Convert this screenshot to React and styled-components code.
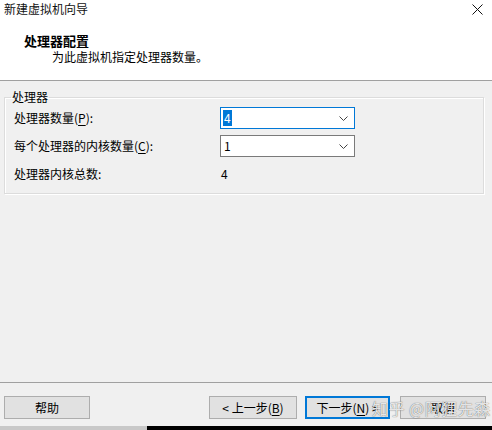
import React from 'react';
import styled, { createGlobalStyle } from 'styled-components';

const GlobalStyle = createGlobalStyle`
    html, body {
        margin: 0;
        padding: 0;
        background: #f0f0f0;
    }
    body {
        font-family: "Noto Sans CJK SC", "Noto Sans", sans-serif;
        font-size: 12px;
        color: #000;
    }
`

const Window = styled.div`
    position: relative;
    width: 492px;
    height: 430px;
    display: flex;
    flex-direction: column;
    background: #f0f0f0;
    overflow: hidden;
`

const Header = styled.div`
    height: 81px;
    flex-shrink: 0;
    padding-top: 2px;
    box-sizing: border-box;
    background: #fff;
    border-bottom: 1px solid #a0a0a0;
`

const TitleRow = styled.div`
    height: 14px;
    display: flex;
    align-items: center;
    justify-content: space-between;
    padding: 0 9px 0 4px;
`

const Title = styled.span`
    line-height: 14px;
    color: #111;
`

const Heading = styled.div`
    margin: 17px 0 0 24px;
    line-height: 16px;
    font-size: 13px;
    font-weight: bold;
`

const SubHeading = styled.div`
    margin-left: 52px;
    line-height: 16px;
`

const Body = styled.div`
    flex: 1;
    padding: 8px 8px 0 4px;
`

// etched group box with its caption sitting on the top edge
const GroupBox = styled.fieldset`
    margin: 0;
    padding: 2px 0 8px 9px;
    min-width: 0;
    border: 1px solid #dcdcdc;
    box-shadow: inset 1px 1px 0 #fff, 1px 1px 0 #fff;
`

const Legend = styled.legend`
    margin-left: -3px;
    padding: 0 1px;
    line-height: 16px;
`

const Grid = styled.div`
    display: grid;
    grid-template-columns: 206px 135px;
    grid-auto-rows: 22px;
    row-gap: 6px;
    align-items: center;
`

const Label = styled.span`
    line-height: 22px;
`

const Key = styled.span`
    text-decoration: underline;
    text-underline-offset: 2px;
`

const Combo = styled.div`
    height: 22px;
    box-sizing: border-box;
    display: flex;
    align-items: center;
    justify-content: space-between;
    padding: 0 6px 0 2px;
    background: #fff;
    border: 1px solid ${props => props.focused ? '#0078d7' : '#7a7a7a'};
`

const ComboValue = styled.span`
    padding: 0 1px;
    line-height: 16px;
    background: ${props => props.selected ? '#0078d7' : 'transparent'};
    color: ${props => props.selected ? '#fff' : '#000'};
`

const Value = styled.span`
    padding-left: 1px;
    line-height: 22px;
`

const Footer = styled.div`
    height: 44px;
    flex-shrink: 0;
    box-sizing: border-box;
    border-top: 1px solid #a0a0a0;
    display: flex;
    align-items: flex-start;
    padding: 13px 6px 0 4px;
`

const Button = styled.div`
    width: ${props => props.w}px;
    height: 23px;
    margin-left: ${props => props.gap || 0}px;
    box-sizing: border-box;
    display: flex;
    align-items: center;
    justify-content: center;
    background: #e1e1e1;
    border: ${props => props.primary ? '2px solid #0078d7' : '1px solid #adadad'};
    font-size: 12px;
`

const Spacer = styled.div`
    flex: 1;
`

const Taskbar = styled.div`
    height: 4px;
    flex-shrink: 0;
    display: flex;
`

const TaskbarStub = styled.div`
    width: 147px;
    background: #c8c8c8;
`

const TaskbarRest = styled.div`
    flex: 1;
    background: #000;
`

// site stamp printed over the button row
const Watermark = styled.div`
    position: absolute;
    left: 372px;
    top: 398px;
    font-size: 16px;
    line-height: 20px;
    letter-spacing: 0.5px;
    color: rgba(255, 255, 255, 0.85);
    text-shadow: 0 0 1px rgba(0, 0, 0, 0.7);
    white-space: pre;
    pointer-events: none;
`

const CloseIcon = () => (
    <svg width="11" height="11" viewBox="0 0 11 11">
        <path d="M0.5 0.5 L10.5 10.5 M10.5 0.5 L0.5 10.5" stroke="#111" strokeWidth="1" fill="none" />
    </svg>
)

const Chevron = () => (
    <svg width="9" height="5" viewBox="0 0 9 5">
        <path d="M0.5 0.5 L4.5 4.5 L8.5 0.5" stroke="#444" strokeWidth="1" fill="none" />
    </svg>
)

const App = () => {
    return (
        <Window>
            <GlobalStyle />
            <Header>
                <TitleRow>
                    <Title>新建虚拟机向导</Title>
                    <CloseIcon />
                </TitleRow>
                <Heading>处理器配置</Heading>
                <SubHeading>为此虚拟机指定处理器数量。</SubHeading>
            </Header>
            <Body>
                <GroupBox>
                    <Legend>处理器</Legend>
                    <Grid>
                        <Label>处理器数量(<Key>P</Key>):</Label>
                        <Combo focused>
                            <ComboValue selected>4</ComboValue>
                            <Chevron />
                        </Combo>
                        <Label>每个处理器的内核数量(<Key>C</Key>):</Label>
                        <Combo>
                            <ComboValue>1</ComboValue>
                            <Chevron />
                        </Combo>
                        <Label>处理器内核总数:</Label>
                        <Value>4</Value>
                    </Grid>
                </GroupBox>
            </Body>
            <Footer>
                <Button w={86}>帮助</Button>
                <Spacer />
                <Button w={88}>&lt; 上一步(<Key>B</Key>)</Button>
                <Button w={85} gap={8} primary>下一步(<Key>N</Key>) &gt;</Button>
                <Button w={86} gap={10}>取消</Button>
            </Footer>
            <Taskbar>
                <TaskbarStub />
                <TaskbarRest />
            </Taskbar>
            <Watermark>知乎 @阿狸先森</Watermark>
        </Window>
    );
}

export default App;
